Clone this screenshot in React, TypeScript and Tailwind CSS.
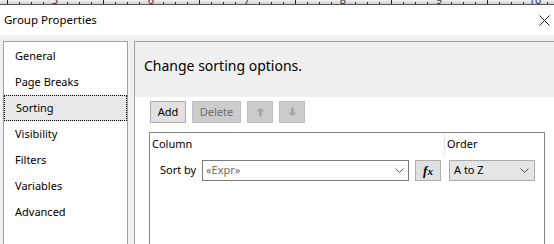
import React from "react";

const font = { fontFamily: '"Noto Sans", "Open Sans", sans-serif' };

function Ruler() {
  const ticks: React.ReactNode[] = [];
  for (let i = 0; i < 48; i++) {
    const x = 7 + i * 12;
    const major = i % 8 === 0;
    const half = i % 8 === 4;
    if (half) continue;
    ticks.push(
      <line key={i} x1={x + 0.5} x2={x + 0.5} y1={major ? 0 : 2} y2={4} stroke="#222" strokeWidth={1} />
    );
  }
  const nums = [
    { x: 55, t: "5" },
    { x: 151, t: "6" },
    { x: 247, t: "7" },
    { x: 343, t: "8" },
    { x: 439, t: "9" },
    { x: 535, t: "10" },
  ];
  return (
    <svg width="554" height="5" className="block">
      <defs>
        <linearGradient id="rg" x1="0" y1="0" x2="0" y2="1">
          <stop offset="0" stopColor="#f2f2f2" />
          <stop offset="1" stopColor="#cfcfcf" />
        </linearGradient>
      </defs>
      <rect x="0" y="0" width="554" height="4" fill="url(#rg)" />
      {ticks}
      {nums.map((n) => (
        <text key={n.t} x={n.x} y={4} textAnchor="middle" fontSize="11" fill="#3a3040" fontFamily="Noto Sans, sans-serif">
          {n.t}
        </text>
      ))}
      <line x1="0" x2="554" y1="4.5" y2="4.5" stroke="#555" strokeWidth={1} />
    </svg>
  );
}

function ArrowIcon({ down }: { down?: boolean }) {
  return (
    <svg width="9" height="10" viewBox="0 0 9 10" style={{ transform: down ? "rotate(180deg)" : undefined }}>
      <path d="M4.5 0.5 L8.5 4.5 L6 4.5 L6 9.5 L3 9.5 L3 4.5 L0.5 4.5 Z" fill="#a8a8a8" />
    </svg>
  );
}

function Chevron() {
  return (
    <svg width="9" height="5" viewBox="0 0 9 5">
      <path d="M0.5 0.5 L4.5 4.5 L8.5 0.5" fill="none" stroke="#555" strokeWidth="1" />
    </svg>
  );
}

const navItems = ["General", "Page Breaks", "Sorting", "Visibility", "Filters", "Variables", "Advanced"];

export default function App() {
  return (
    <div className="w-[554px] h-[244px] overflow-hidden bg-[#f0f0f0] text-black flex flex-col" style={font}>
      <Ruler />
      <div className="h-[30px] bg-white flex items-center justify-between pl-[4px] pr-[4px] shrink-0">
        <span className="text-[11.5px] leading-none">Group Properties</span>
        <svg width="11" height="11" viewBox="0 0 11 11">
          <path d="M0.5 0.5 L10.5 10.5 M10.5 0.5 L0.5 10.5" stroke="#222" strokeWidth="1" />
        </svg>
      </div>
      <div className="flex flex-1 pt-[6px] pl-[3px] min-h-0">
        <div className="w-[125px] h-[220px] border border-[#a0a0a0] bg-white shrink-0 pt-[1px]">
          {navItems.map((n) => (
            <div
              key={n}
              className={
                "h-[26px] flex items-center pl-[11px] text-[11px] " +
                (n === "Sorting" ? "bg-[#e8e8e8] border border-dotted border-black pl-[10px]" : "")
              }
            >
              {n}
            </div>
          ))}
        </div>
        <div className="ml-[6px] flex-1 border-l border-t border-[#a0a0a0] flex flex-col">
          <div className="h-[55px] pt-[14px] pl-[9px] text-[14px] leading-[20px] shrink-0">Change sorting options.</div>
          <div className="flex-1 bg-white pt-[4px] pl-[14px]">
            <div className="flex gap-[6px] ml-[1px] h-[22px]">
              <div className="w-[36px] h-[22px] bg-[#e1e1e1] border border-[#adadad] flex items-center justify-center text-[11px]">
                Add
              </div>
              <div className="w-[49px] h-[22px] bg-[#cccccc] border border-[#bfbfbf] flex items-center justify-center text-[11px] text-[#6d6d6d]">
                Delete
              </div>
              <div className="w-[26px] h-[22px] bg-[#cccccc] border border-[#bfbfbf] flex items-center justify-center">
                <ArrowIcon />
              </div>
              <div className="w-[26px] h-[22px] bg-[#cccccc] border border-[#bfbfbf] flex items-center justify-center">
                <ArrowIcon down />
              </div>
            </div>
            <div className="mt-[9px] w-[396px] h-[120px] border border-[#828282]">
              <div className="flex h-[22px]">
                <div className="w-[294px] flex items-center pl-[2px] text-[11px]">Column</div>
                <div className="border-l border-[#e3e3e3] flex items-center pl-[2px] text-[11px]">Order</div>
              </div>
              <div className="flex items-center mt-[5px] h-[21px]">
                <span className="ml-[10px] w-[42px] text-[11px]">Sort by</span>
                <div className="w-[207px] h-[21px] border border-[#7a7a7a] bg-white flex items-center justify-between pl-[3px] pr-[4px]">
                  <span className="text-[11px] text-[#6d6d6d]">«Expr»</span>
                  <Chevron />
                </div>
                <div
                  className="ml-[6px] w-[26px] h-[21px] bg-[#e1e1e1] border border-[#adadad] flex items-center justify-center text-[13px] font-bold italic"
                  style={{ fontFamily: '"Liberation Serif", serif' }}
                >
                  <span>f</span>
                  <span className="text-[11px] mt-[2px]">x</span>
                </div>
                <div className="ml-[8px] w-[86px] h-[21px] bg-[#e5e5e5] border border-[#acacac] flex items-center justify-between pl-[4px] pr-[5px]">
                  <span className="text-[11px]">A to Z</span>
                  <Chevron />
                </div>
              </div>
            </div>
          </div>
        </div>
      </div>
    </div>
  );
}
